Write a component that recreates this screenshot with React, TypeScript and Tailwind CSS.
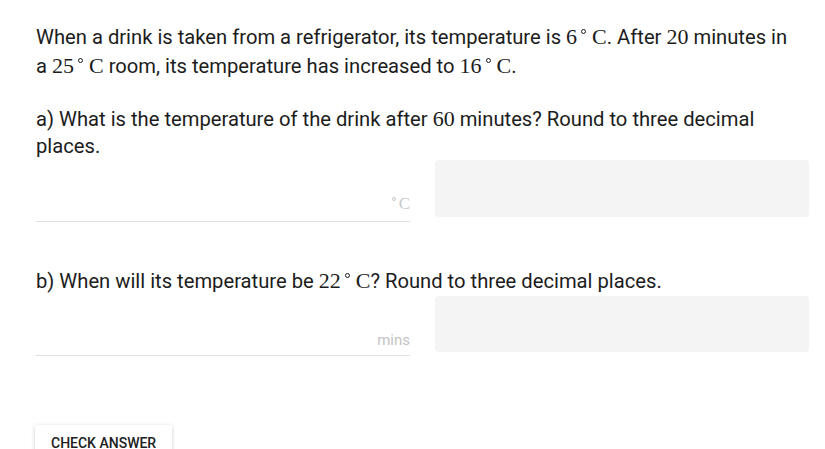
import React from "react";

const M = ({ children }: { children: React.ReactNode }) => (
  <span className="font-['Liberation_Serif','DejaVu_Serif',serif] text-[22px] leading-none font-normal">{children}</span>
);

const Circ = ({ small }: { small?: boolean }) => (
  <span
    className={
      small
        ? "inline-block w-[4px] h-[4px] rounded-full border border-current relative top-[-8px] ml-[2px] mr-[3px]"
        : "inline-block w-[5px] h-[5px] rounded-full border border-current relative top-[-10px] ml-[4px] mr-[6px]"
    }
  />
);

const Deg = ({ n }: { n?: string }) => (
  <M>
    {n}
    <Circ />C
  </M>
);

export default function App() {
  return (
    <div className="min-h-screen bg-white font-['Roboto',sans-serif] font-normal text-[20.2px] text-[#1c1c1c] pl-[36px] pr-[16px] pt-[23px]">
      <p className="leading-[29px]">
        When a drink is taken from a refrigerator, its temperature is <Deg n="6" />. After <M>20</M> minutes in{" "}
        <span className="whitespace-nowrap">
          a <Deg n="25" />
        </span>{" "}
        room, its temperature has increased to <Deg n="16" />.
      </p>
      <p className="leading-[27px] mt-[25px]">
        a) What is the temperature of the drink after <M>60</M> minutes? Round to three decimal places.
      </p>
      <div className="grid grid-cols-2 gap-[25px] items-start">
        <div className="h-[62px] flex items-end">
          <div className="w-full border-b border-[#e0e0e0] flex justify-end pb-[9px] items-end">
            <span className="font-['Liberation_Serif',serif] font-normal text-[17px] text-[#c8c8c8] leading-none">
              <Circ small />C
            </span>
          </div>
        </div>
        <div className="h-[57px] rounded-[4px] bg-[#f4f4f4]" />
      </div>
      <p className="leading-[27px] mt-[46px]">
        b) When will its temperature be <Deg n="22" />? Round to three decimal places.
      </p>
      <div className="grid grid-cols-2 gap-[25px] items-start mt-[1px]">
        <div className="h-[60px] flex items-end">
          <div className="w-full border-b border-[#e0e0e0] flex justify-end pb-[7px]">
            <span className="text-[15px] font-normal text-[#c4c4c4] leading-none">mins</span>
          </div>
        </div>
        <div className="h-[56px] rounded-[4px] bg-[#f4f4f4]" />
      </div>
      <button className="mt-[69px] -ml-[1px] bg-white shadow-[0_1px_4px_rgba(0,0,0,0.2)] rounded-[2px] h-[36px] px-[16px] text-[14px] font-medium text-[#212121] uppercase tracking-normal">
        Check Answer
      </button>
    </div>
  );
}
